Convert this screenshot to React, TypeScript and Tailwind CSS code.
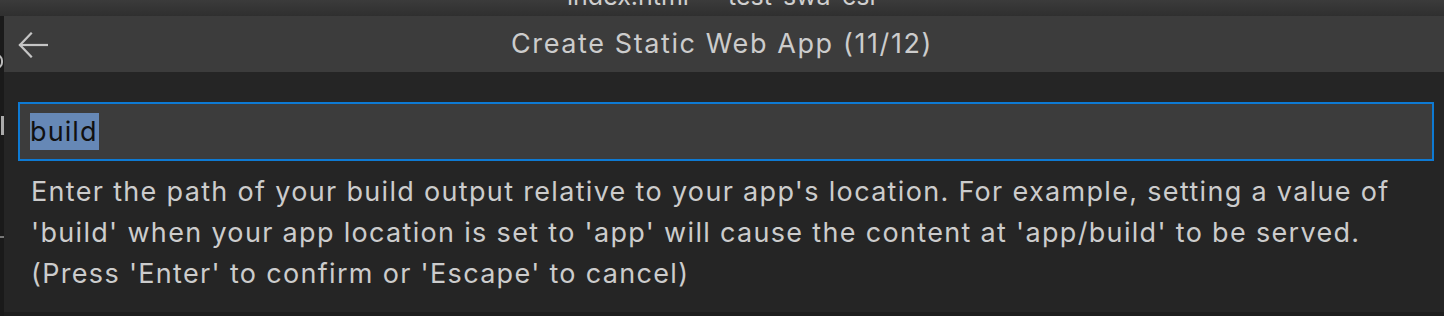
import React from "react";

const font = { fontFamily: "Inter, 'Noto Sans', 'Liberation Sans', sans-serif" };

function BackArrow() {
  return (
    <svg width="30" height="26" viewBox="0 0 30 26" fill="none" stroke="#c5c5c5" strokeWidth="2.2" strokeLinecap="square">
      <path d="M2 13 H29" />
      <path d="M13 1.5 L2 13 L13 24.5" strokeLinejoin="miter" />
    </svg>
  );
}

export default function App() {
  return (
    <div className="w-[1444px] h-[316px] overflow-hidden bg-[#1e1e1e] flex flex-col" style={font}>
      {/* window title strip */}
      <div className="h-[16px] shrink-0 overflow-hidden bg-gradient-to-b from-[#3b3b3b] to-[#2f2f2f] flex justify-center">
        <div className="-mt-[19px] text-[25px] leading-[30px] text-[#cfcfcf] whitespace-nowrap pl-[2px]">
          index.html — test-swa-csr
        </div>
      </div>
      <div className="flex flex-1 min-h-0">
        {/* editor edge behind */}
        <div className="w-[4px] shrink-0 bg-[#1a1a1a] overflow-hidden flex flex-col">
          <div className="h-[296px] relative">
            <div className="absolute left-[-10px] top-[38px] w-[13px] h-[15px] rounded-full border-[2.5px] border-[#bbbbbb]" />
            <div className="absolute left-[1px] top-[100px] w-[3px] h-[19px] bg-[#aaaaaa]" />
            <div className="absolute left-[0px] top-[220px] w-[4px] h-[2px] bg-[#777777]" />
          </div>
        </div>
        {/* quick input */}
        <div className="flex-1 flex flex-col">
          <div className="h-[56px] shrink-0 bg-[#3c3c3c] flex items-center relative">
            <div className="pl-[14px] pt-[1px] flex items-center">
              <BackArrow />
            </div>
            <div className="absolute inset-0 flex items-center justify-center pr-[4px] text-[27px] tracking-[1.6px] text-[#cccccc]">
              Create Static Web App (11/12)
            </div>
          </div>
          <div className="h-[240px] shrink-0 bg-[#252525] pt-[30px] pl-[14px] pr-[10px]">
            <div className="h-[59px] border-2 border-[#0e7ad3] bg-[#3c3c3c] flex items-center pl-[10px]">
              <span className="bg-[#6688b6] text-[#111111] text-[27px] tracking-[1.1px] leading-[37px] h-[37px] pr-[1px]">build</span>
            </div>
            <div className="pl-[13px] pt-[10px] text-[27px] tracking-[1.32px] leading-[41px] text-[#cccccc] whitespace-nowrap">
              <div>Enter the path of your build output relative to your app's location. For example, setting a value of</div>
              <div>'build' when your app location is set to 'app' will cause the content at 'app/build' to be served.</div>
              <div>(Press 'Enter' to confirm or 'Escape' to cancel)</div>
            </div>
          </div>
        </div>
      </div>
    </div>
  );
}
